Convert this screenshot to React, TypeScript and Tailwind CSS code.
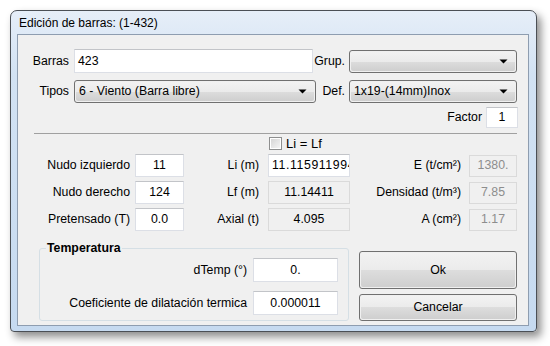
import React from "react";

const FONT = { fontFamily: '"Liberation Sans", Arial, sans-serif' };

function Arrow() {
  return (
    <svg width="9" height="5" viewBox="0 0 9 5" className="shrink-0">
      <path d="M0.5 0.5 L8.5 0.5 L4.5 4.5 Z" fill="#000" />
    </svg>
  );
}

function Select({ w, h, value }: { w: string; h: string; value?: string }) {
  return (
    <div
      className={`${w} ${h} shrink-0 rounded-[3px] border border-[#707070] p-[1px] flex`}
    >
      <div className="flex-1 rounded-[2px] bg-[linear-gradient(to_bottom,#f2f2f2_0%,#ebebeb_50%,#dddddd_50%,#cfcfcf_100%)] flex items-center pl-[3px] pr-[7px]">
        <span className="flex-1 truncate">{value}</span>
        <Arrow />
      </div>
    </div>
  );
}

function Field({
  w,
  h,
  value,
  align = "center",
  variant = "white",
  extra = "",
}: {
  w: string;
  h: string;
  value: string;
  align?: "left" | "center";
  variant?: "white" | "ro" | "dis";
  extra?: string;
}) {
  const bg =
    variant === "white"
      ? "bg-white border-[#dcdfe6] border-t-[#c2c4c8]"
      : "bg-[#f0f0f0] border-[#dadada]";
  const color = variant === "dis" ? "text-[#8d8d8d]" : "text-black";
  return (
    <div
      className={`${w} ${h} shrink-0 border ${bg} ${color} flex items-center overflow-hidden whitespace-nowrap ${
        align === "center" ? "justify-center" : "pl-[3px]"
      } ${extra}`}
    >
      {value}
    </div>
  );
}

function Button({ h, label }: { h: string; label: string }) {
  return (
    <div
      className={`w-[158px] ${h} rounded-[3px] border border-[#707070] p-[1px] flex`}
    >
      <div className="flex-1 rounded-[2px] bg-[linear-gradient(to_bottom,#f2f2f2_0%,#ebebeb_50%,#dddddd_50%,#cfcfcf_100%)] flex items-center justify-center">
        {label}
      </div>
    </div>
  );
}

export default function App() {
  return (
    <div
      className="w-[550px] h-[346px] bg-white pt-[10px] pl-[10px] text-[12.3px] text-black leading-none"
      style={FONT}
    >
      <div className="w-[527px] h-[322px] border border-[#4b4f55] rounded-t-[7px] rounded-b-[4px] bg-[linear-gradient(to_bottom,#e6eef8,#d2e2f3_20%,#c6daf0)] shadow-[4px_5px_9px_rgba(0,0,0,0.45)] flex flex-col">
        <div className="h-[23px] pl-[8px] flex items-center text-[12px]">
          Edición de barras: (1-432)
        </div>
        <div className="ml-[6px] mr-[7px] h-[292px] border border-[#8e9db0] bg-[#f0f0f0] flex flex-col">
          {/* Row Barras / Grup */}
          <div className="mt-[14px] flex items-center">
            <div className="w-[51px] text-right">Barras</div>
            <div className="ml-[5px]">
              <Field w="w-[239px]" h="h-[24px]" value="423" align="left" />
            </div>
            <div className="w-[36px] text-right pr-[4px]">Grup.</div>
            <Select w="w-[168px]" h="h-[23px]" />
          </div>
          {/* Row Tipos / Def */}
          <div className="mt-[7px] flex items-center">
            <div className="w-[51px] text-right">Tipos</div>
            <div className="ml-[5px]">
              <Select w="w-[242px]" h="h-[23px]" value="6 - Viento (Barra libre)" />
            </div>
            <div className="w-[33px] text-right pr-[4px]">Def.</div>
            <Select w="w-[168px]" h="h-[23px]" value="1x19-(14mm)Inox" />
          </div>
          {/* Factor */}
          <div className="mt-[4px] flex items-center justify-end pr-[10px] gap-[4px]">
            <span>Factor</span>
            <Field w="w-[32px]" h="h-[21px]" value="1" />
          </div>
          {/* Separator */}
          <div className="mt-[5px] ml-[16px] w-[483px] h-px bg-[#a0a0a0]" />
          {/* Checkbox */}
          <div className="mt-[3px] ml-[251px] flex items-center gap-[4px]">
            <div className="w-[13px] h-[13px] border border-[#8e8f8f] p-px bg-white">
              <div className="w-full h-full bg-[linear-gradient(135deg,#d6d6d6,#f4f4f4)]" />
            </div>
            <span className="text-[13px]">Li = Lf</span>
          </div>
          {/* Grid rows */}
          <div className="mt-[4px] flex flex-col gap-[4px]">
            {[
              ["Nudo izquierdo", "11", "Li (m)", "11.1159119943", "white", "E (t/cm²)", "1380."],
              ["Nudo derecho", "124", "Lf (m)", "11.14411", "ro", "Densidad (t/m³)", "7.85"],
              ["Pretensado (T)", "0.0", "Axial (t)", "4.095", "ro", "A (cm²)", "1.17"],
            ].map((r) => (
              <div key={r[0]} className="flex items-center h-[23px]">
                <div className="w-[112px] text-right">{r[0]}</div>
                <div className="ml-[5px]">
                  <Field w="w-[49px]" h="h-[23px]" value={r[1]} />
                </div>
                <div className="w-[75px] text-right">{r[2]}</div>
                <div className="ml-[9px]">
                  <Field
                    w="w-[82px]"
                    h="h-[23px]"
                    value={r[3]}
                    variant={r[4] as "white" | "ro"}
                    align={r[4] === "white" ? "left" : "center"}
                    extra={r[4] === "white" ? "tracking-[0.6px]" : ""}
                  />
                </div>
                <div className="w-[111px] text-right">{r[5]}</div>
                <div className="ml-[8px]">
                  <Field w="w-[48px]" h="h-[22px]" value={r[6]} variant="dis" />
                </div>
              </div>
            ))}
          </div>
          {/* Bottom section */}
          <div className="mt-[10px] flex items-start">
            <fieldset className="ml-[21px] w-[310px] border border-[#d5dfe5] rounded-[3px] pb-[5px]">
              <legend className="ml-[6px] px-[1px] font-bold leading-[14px]">
                Temperatura
              </legend>
              <div className="mt-[3px] flex items-center justify-end pr-[10px] gap-[6px]">
                <span>dTemp (°)</span>
                <Field w="w-[85px]" h="h-[24px]" value="0." />
              </div>
              <div className="mt-[9px] flex items-center justify-end pr-[10px] gap-[6px]">
                <span>Coeficiente de dilatación termica</span>
                <Field w="w-[85px]" h="h-[24px]" value="0.000011" />
              </div>
            </fieldset>
            <div className="ml-[10px] mt-[10px] flex flex-col gap-[5px]">
              <Button h="h-[38px]" label="Ok" />
              <Button h="h-[27px]" label="Cancelar" />
            </div>
          </div>
        </div>
      </div>
    </div>
  );
}
